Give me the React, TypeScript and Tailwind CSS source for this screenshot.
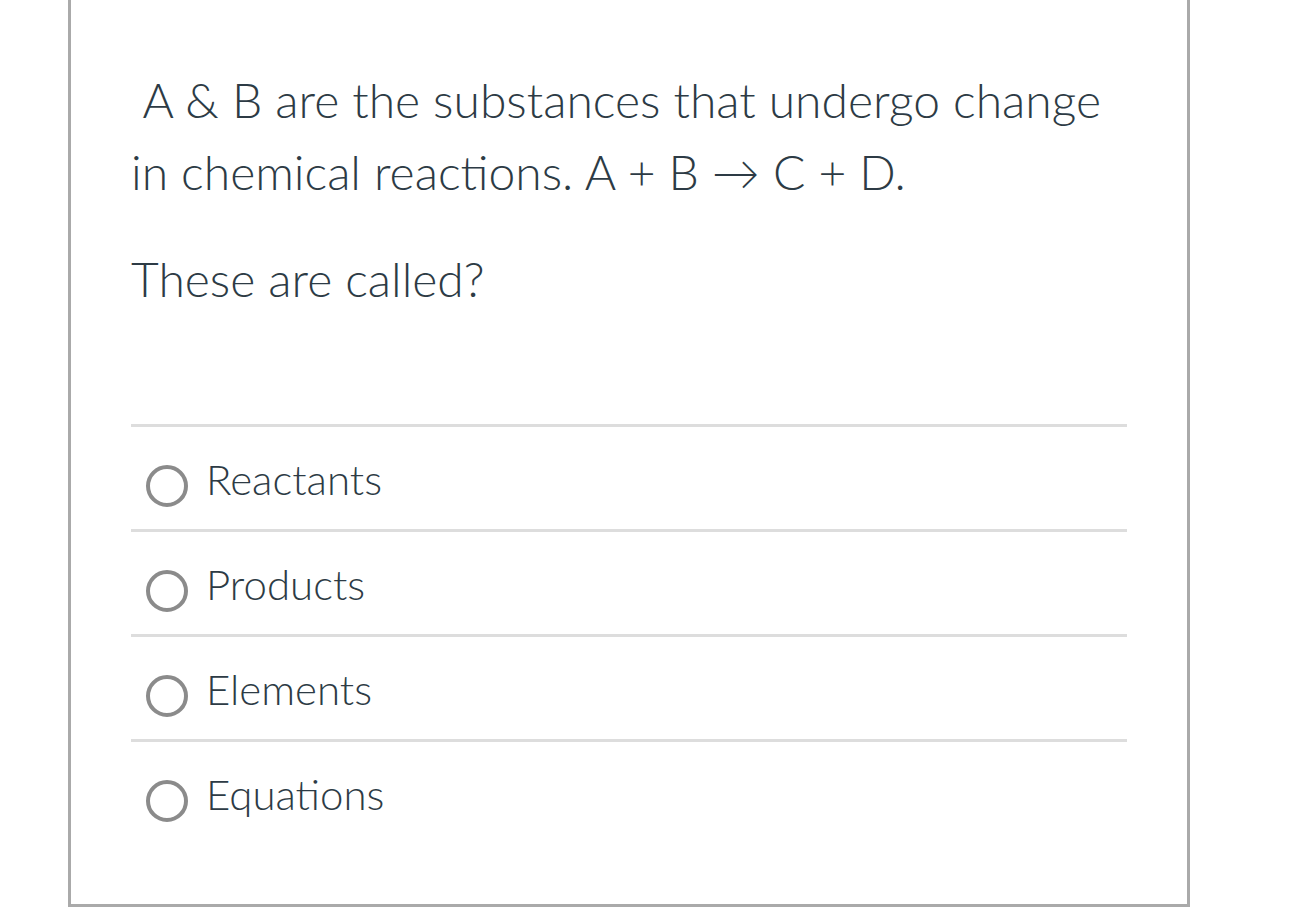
const answers = ["Reactants", "Products", "Elements", "Equations"];

function Radio() {
  return (
    <span className="mt-[13px] block h-[42px] w-[42px] shrink-0 rounded-full border-[4px] border-[#8b8b8b] bg-white" />
  );
}

export default function App() {
  return (
    <div className="min-h-screen bg-white pb-2 pl-[68px] pr-[100px] font-['Lato',sans-serif] font-light text-[#2d3b45]">
      <div className="w-[1122px] border-x-[3px] border-b-[3px] border-[#aaaaaa] px-[60px] pb-[60px] pt-[64px]">
        <p className="text-[48px] leading-[72px]">
          &nbsp;A &amp; B are the substances that undergo change in chemical reactions. A + B → C + D.
        </p>
        <p className="mt-[35px] text-[48px] leading-[72px]">These are called?</p>

        <ul className="mt-[109px]">
          {answers.map((a) => (
            <li
              key={a}
              className="flex items-start gap-[18px] border-t-[3px] border-[#dddddd] pb-[22px] pl-[15px] pt-[25px]"
            >
              <Radio />
              <span className="text-[42px] leading-[55px]">{a}</span>
            </li>
          ))}
        </ul>
      </div>
    </div>
  );
}
